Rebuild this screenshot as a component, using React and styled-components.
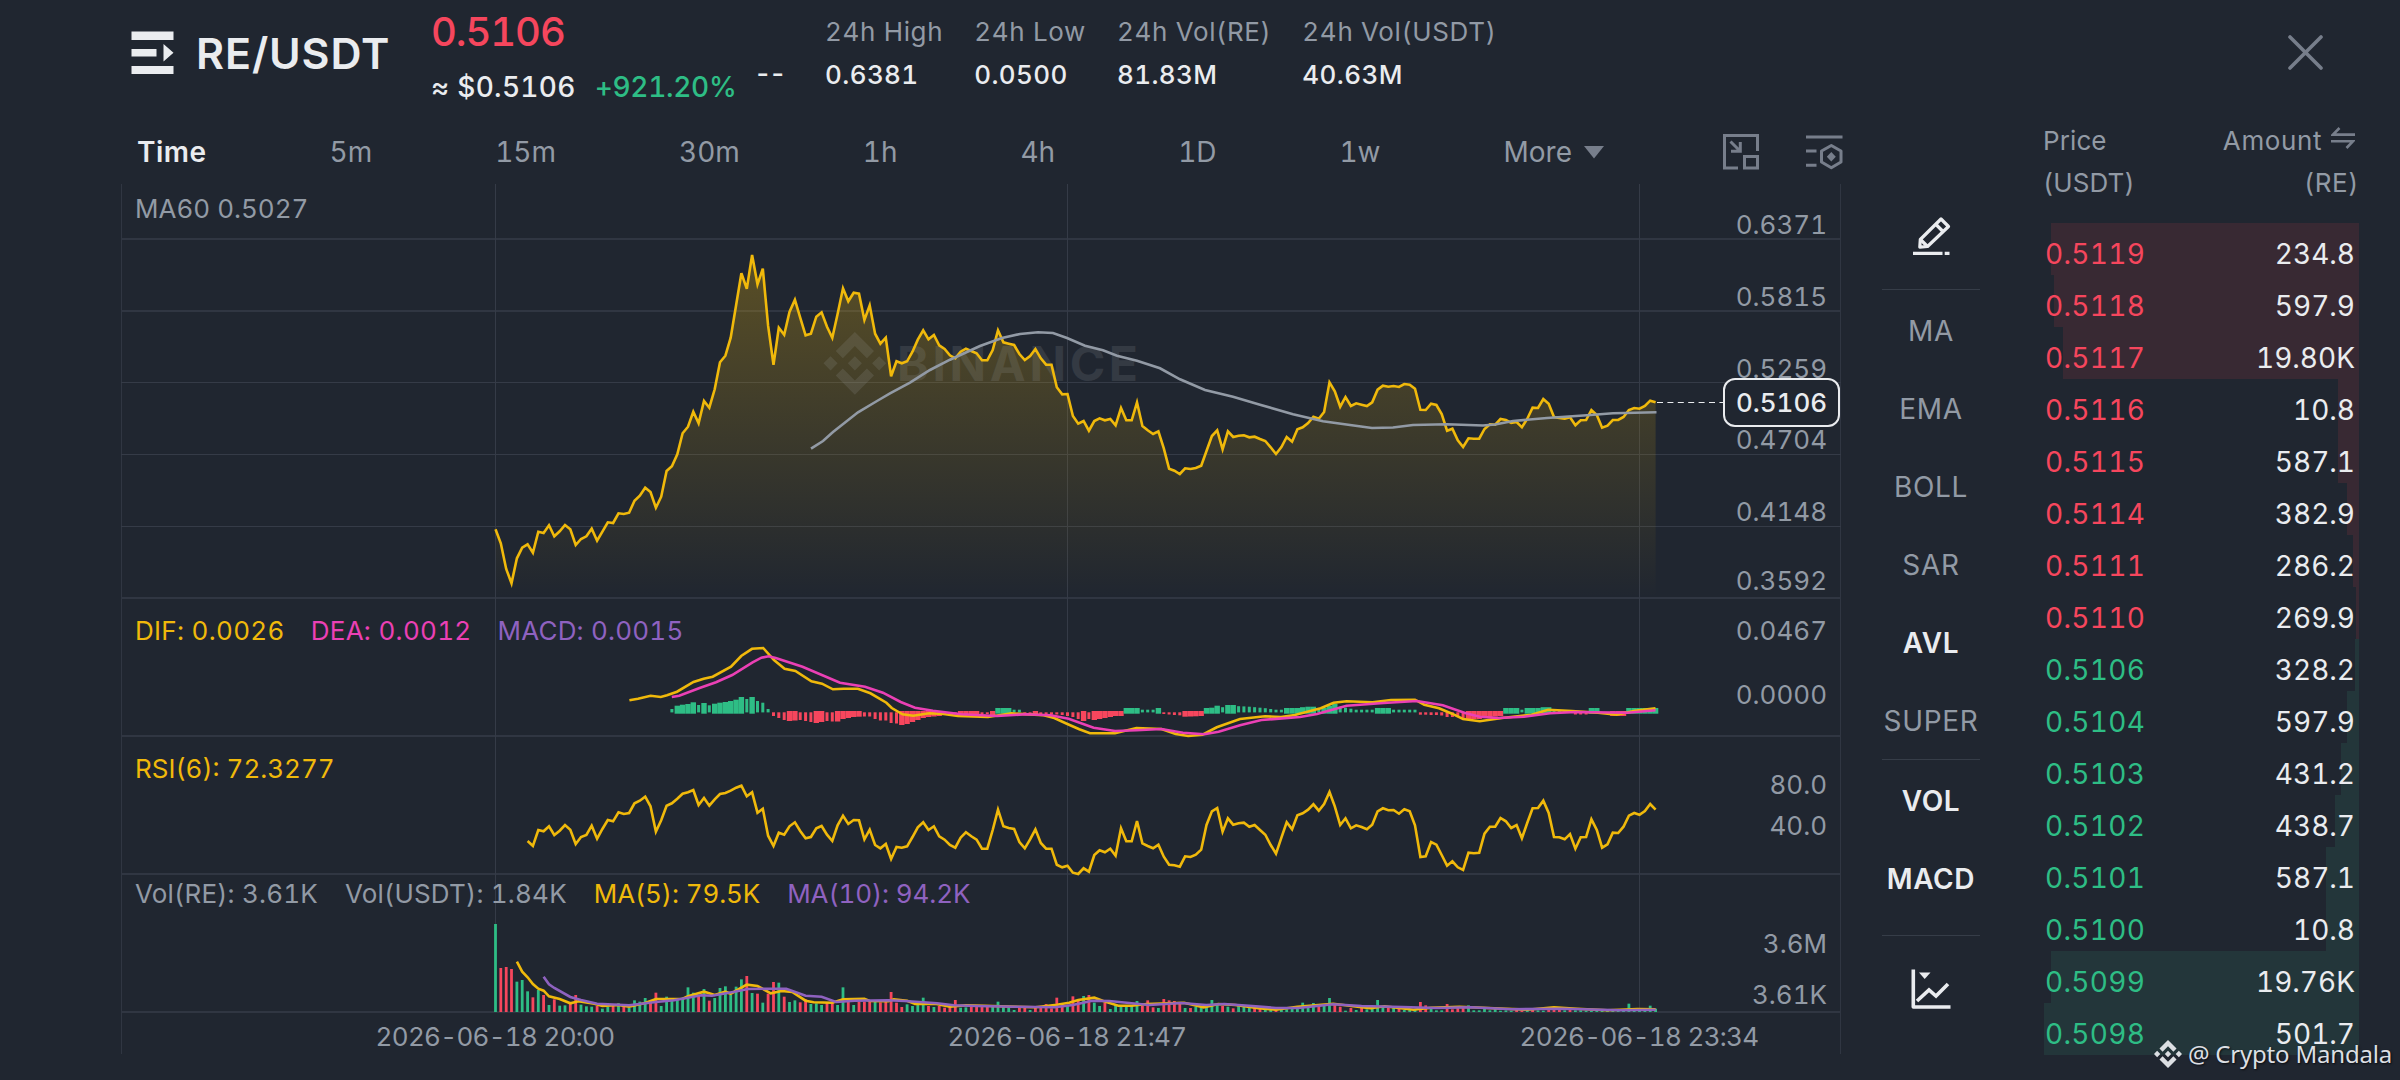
import React from 'react';
import styled, { createGlobalStyle } from 'styled-components';

const c = {
  bg: '#202630',
  line: '#303642',
  text: '#eaecef',
  muted: '#929aa5',
  icon: '#777e8b',
  red: '#f6465d',
  green: '#2ebd85',
  yellow: '#f0b90b',
  pink: '#eb40b5',
  purple: '#8f62c0'
};

const GlobalStyle = createGlobalStyle`
  * { box-sizing: border-box; }
  body {
    margin: 0;
    background: ${c.bg};
    color: ${c.text};
    font-family: Inter, "Liberation Sans", sans-serif;
    font-variant-numeric: tabular-nums;
    overflow: hidden;
  }
`;

const Page = styled.div`
  position: relative;
  width: 2400px;
  height: 1080px;
  display: flex;
  flex-direction: column;
  white-space: nowrap;
`;

/* ---------- header ---------- */

const Header = styled.header`
  height: 120px;
  padding: 0 77px 0 131px;
  display: flex;
  align-items: flex-start;
`;

const PairButton = styled.div`
  height: 105px;
  width: 300px;
  display: flex;
  align-items: center;
  gap: 22px;
`;

const Pair = styled.h1`
  margin: 0;
  font-size: 43px;
  line-height: 50px;
  font-weight: 600;
  letter-spacing: 0.9px;
`;

const PriceBlock = styled.div`
  width: 303px;
  padding-top: 7px;
`;

const LastPrice = styled.div`
  font-size: 40px;
  line-height: 50px;
  font-weight: 500;
  letter-spacing: -1.1px;
  color: ${c.red};
`;

const PriceSub = styled.div`
  display: flex;
  gap: 19px;
  padding-top: 15px;
  font-size: 28px;
  line-height: 31px;
  font-weight: 500;
  letter-spacing: 0.3px;
`;

const Change = styled.span`
  color: ${c.green};
  letter-spacing: -0.3px;
`;

const Placeholder = styled.div`
  width: 91px;
  padding: 58px 0 0 20px;
  font-size: 27px;
  line-height: 32px;
  font-weight: 500;
  letter-spacing: -2.5px;
`;

const Stats = styled.dl`
  margin: 0;
  display: flex;
  gap: 31px;
  padding-top: 15px;
  flex: 1;
`;

const StatLabel = styled.dt`
  font-size: 26px;
  line-height: 33px;
  letter-spacing: 0.65px;
  color: ${c.muted};
`;

const StatValue = styled.dd`
  margin: 10px 0 0;
  font-size: 26px;
  line-height: 33px;
  font-weight: 500;
  letter-spacing: 0.4px;
`;

const CloseButton = styled.div`
  padding-top: 35px;
  line-height: 0;
`;

/* ---------- body ---------- */

const Body = styled.main`
  display: grid;
  grid-template-columns: 1720px 160px 1fr;
  padding-left: 121px;
`;

const Toolbar = styled.div`
  height: 64px;
  display: flex;
  align-items: center;
  padding-left: 16px;
`;

const Tabs = styled.nav`
  flex: none;
  width: 1467px;
  display: flex;
  justify-content: space-between;
  font-size: 28px;
  line-height: 34px;
`;

const Tab = styled.span`
  display: flex;
  align-items: center;
  gap: 12px;
  color: ${(p) => (p.$active ? c.text : c.muted)};
  font-weight: ${(p) => (p.$active ? 600 : 400)};
  letter-spacing: ${(p) => (p.$active ? 0.5 : 0)}px;
`;

const Tools = styled.div`
  flex: none;
  display: flex;
  gap: 47px;
  margin-left: 119px;
`;

const Panes = styled.div`
  border-left: 1px solid ${c.line};
  border-right: 1px solid ${c.line};
`;

const Pane = styled.section`
  position: relative;
  height: ${(p) => p.$h}px;
  display: flex;
  justify-content: space-between;
  padding: 0 13px;
  font-size: 26px;
  line-height: 30px;
`;

const Plot = styled.svg`
  position: absolute;
  top: 0;
  left: -1px;
  overflow: visible;
`;

const Legend = styled.div`
  position: relative;
  display: flex;
  gap: ${(p) => p.$gap || 28}px;
  height: 30px;
  margin-top: ${(p) => p.$top}px;
`;

const LegendItem = styled.span`
  color: ${(p) => p.$color || c.muted};
  letter-spacing: ${(p) => p.$ls || 0}px;
`;

const Axis = styled.div`
  position: relative;
  display: flex;
  flex-direction: column;
  align-items: flex-end;
  gap: ${(p) => p.$gap}px;
  padding-top: ${(p) => p.$top}px;
  color: ${c.muted};
`;

const FloorLabel = styled.span`
  margin-top: -3px;
`;

const PriceTag = styled.div`
  position: absolute;
  top: 194px;
  right: 0;
  width: 117px;
  height: 49px;
  display: flex;
  align-items: center;
  justify-content: center;
  border: 2px solid ${c.text};
  border-radius: 12px;
  background: ${c.bg};
  color: ${c.text};
  font-weight: 500;
`;

const TimeAxis = styled.div`
  height: 42px;
  display: grid;
  grid-template-columns: repeat(3, 572px);
  justify-items: center;
  padding: 9px 0 0 87px;
  width: 1718px;
  font-size: 26px;
  line-height: 32px;
  letter-spacing: -0.7px;
  color: ${c.muted};
`;

/* ---------- indicator rail ---------- */

const Rail = styled.aside`
  width: 98px;
  margin-left: 41px;
  padding-top: 96px;
  display: flex;
  flex-direction: column;
  align-items: center;
`;

const RailGroup = styled.div`
  width: 100%;
  height: ${(p) => p.$h}px;
  padding-top: ${(p) => p.$top}px;
  border-top: 1px solid #363d48;
  display: flex;
  flex-direction: column;
  align-items: center;
`;

const RailItem = styled.div`
  flex: none;
  height: 78.1px;
  font-size: 28px;
  line-height: 34px;
  letter-spacing: ${(p) => (p.$on ? 0.6 : 0.7)}px;
  font-weight: ${(p) => (p.$on ? 600 : 400)};
  color: ${(p) => (p.$on ? c.text : c.muted)};
`;

const RailIcon = styled.div`
  height: ${(p) => p.$h}px;
  line-height: 0;
`;

/* ---------- order book ---------- */

const Book = styled.aside`
  width: 316px;
  margin-left: 42px;
`;

const BookHead = styled.div`
  height: 103px;
  display: flex;
  justify-content: space-between;
  font-size: 26px;
  line-height: 42px;
  color: ${c.muted};
  letter-spacing: 0.1px;

  div:last-child {
    text-align: right;
    letter-spacing: 0.6px;
  }
  svg {
    margin: 0 4px 1px 9px;
  }
`;

const BookRow = styled.div`
  height: 52px;
  padding: 10px 4px 0 2px;
  display: flex;
  justify-content: space-between;
  font-size: 28px;
  line-height: 43px;
  background: linear-gradient(${(p) => (p.$side === 'ask' ? '#382933, #382933' : '#23363a, #23363a')})
    right / ${(p) => p.$depth}px 100% no-repeat;
`;

const BookPrice = styled.span`
  color: ${(p) => (p.$side === 'ask' ? c.red : c.green)};
  letter-spacing: 0.3px;
`;

const Signature = styled.div`
  position: absolute;
  right: 8px;
  bottom: 9px;
  display: flex;
  align-items: center;
  gap: 6px;
  font-family: "Noto Sans", sans-serif;
  font-size: 24px;
  line-height: 34px;
  letter-spacing: -0.2px;
  color: #dcdfe3;
  text-shadow: 1px 1px 2px rgba(0, 0, 0, 0.7);
`;

/* ---------- data ---------- */

const X0 = 495.5;
const STEP = 5.346;
const xAt = (i) => +(X0 + i * STEP).toFixed(1);

// Each chunk is [offset, samples in thirds of a pixel].
const trace = (chunks, start = 0) =>
  chunks
    .flatMap(([base, ys]) => ys.map((y) => base + y / 3))
    .map((y, i) => `${xAt(i + start)},${y.toFixed(1)}`)
    .join(' ');

const price = trace([
  [230, [898, 940, 1017, 1060, 985, 953, 943, 968, 905, 909, 886, 919, 904, 885, 898, 945, 927, 919, 896, 932, 905, 877, 879,
    850, 852, 848, 812, 797, 773, 786, 833, 800, 723, 709, 673, 610, 590, 545, 580, 513, 533, 478, 397, 377, 323, 226, 130, 176,
    75, 163, 116, 287, 404, 293, 314, 246, 209, 263, 316, 311, 260, 247, 290, 323, 252, 175, 214, 188, 191, 270, 226, 311, 341,
    323, 439, 394, 400, 394, 365, 329, 301, 328, 315, 346, 357, 376, 385, 365]],
  [290, [176, 183, 190, 211, 211, 180, 121, 157, 161, 165, 192, 210, 198, 177, 205, 224, 224, 292, 313, 312, 378, 401, 393,
    422, 393, 385, 391, 387, 406, 354, 391, 391, 337, 408, 421, 432, 424, 475, 536, 542, 552, 535, 537, 534, 527, 483, 438, 421,
    478, 424, 441, 437, 436, 442, 440, 447, 453, 472, 492, 471, 441, 455, 418, 412, 399, 380, 386, 366, 277, 304, 350, 321, 348,
    340, 344, 348, 337, 299, 287, 290, 288, 291, 282, 284, 296]],
  [180, [689, 690, 671, 675, 702, 752, 746, 781, 801, 775, 776, 776, 747, 733, 734, 717, 720, 729, 726, 742, 716, 683, 684,
    657, 671, 711, 714, 716, 712, 736, 721, 720, 690, 705, 743, 737, 720, 720, 711, 690, 684, 686, 678, 662, 667]]
]);

const ma60 =
  '811,448.7 823,441 833,432 858,412.3 877,401 890,393.3 910,382.7 930,370 950,359.7 980,346 1002,338 1020,334 1038,332.3 ' +
  '1053,333 1067,338 1085,345.7 1103,350.3 1117,355.7 1137,360.7 1160,368.3 1180,379.3 1205,390 1233,396.7 1260,404.7 ' +
  '1293,414.3 1323,421.3 1350,425 1372,428 1393,427.5 1413,425 1447,424.3 1483,425.5 1495,424.5 1513,421 1547,418 1587,415.3 ' +
  '1613,413.3 1656.5,412.3';

const dif =
  '629.4,700.3 638,698.7 650.6,695.7 660.8,697 667,695.3 677,691.7 693.5,682 703.7,678.7 712.7,676.7 731,666.7 741.2,656 ' +
  '752,648.8 763.2,648 774,660 784.6,668.7 795.4,671 811.4,681.3 822,683.7 832.9,689.3 843.6,688.7 857.9,688.7 870.4,693.3 ' +
  '886.4,702.7 891.8,708 902.5,714.3 913.2,715.7 929.3,713.3 943.6,714 957.9,716 988,717 1011.4,713.3 1043.6,715.3 1054.3,718 ' +
  '1066.8,723.7 1079.3,729.3 1090,733.3 1115,733.3 1136.4,728 1161.4,729 1175.7,734 1188.2,736 1202.5,734.7 1216.8,727.3 ' +
  '1240,719 1265,716.3 1281,717 1294.8,715 1320.7,708.3 1333.6,702.7 1346.6,701.3 1372.5,702.3 1391,700 1415,699.7 ' +
  '1424.3,704.7 1439,708.3 1452,713.7 1463,719 1479.7,721.3 1502,718 1531.5,714.7 1548.2,709.7 1572,711 1598,712.7 ' +
  '1616.6,714.7 1635,710.7 1655.5,708.3';

const dea =
  '671.8,697 679.2,695.7 699.6,688 716,682.3 732.2,675 752.6,662.3 761.4,657.7 768.6,656.3 775.7,658 802.5,666.7 840,682.7 ' +
  '865,686.7 882.9,692.7 900.7,702 915,707.7 932.9,710.7 961.4,714.3 997,716 1025.7,714.3 1050.7,715.3 1068.6,718.7 ' +
  '1093.6,727.7 1115,731 1136.4,730.3 1161.4,729 1182.9,732.7 1204.3,734.3 1218.6,731.7 1240,725.3 1261.4,720 1300,717 ' +
  '1317,714 1346.6,705.7 1383.6,703 1416.9,701 1442.8,705.3 1465,713 1479.7,716.7 1498,718 1524,716.7 1550,713.3 1576,712 ' +
  '1627.7,712.7 1655.5,710.3';

// Runs of [rising, heights]; rising bars are drawn full width.
const histogram = [
  [0, [4.7]], [1, [8, 9, 9.7, 11.4]], [0, [8.7]], [1, [10.7]], [0, [8.4]], [1, [10, 11, 11.7, 12.7, 14, 16.7]], [0, [14.7]],
  [1, [16.7]], [0, [12.7, 11, 4.7, -5, -7, -9]], [1, [-10, -9.5]], [0, [-9, -10, -11]], [1, [-12, -11]], [0, [-10, -10.5]],
  [1, [-10.5, -8, -7, -6, -5.7]], [0, [-5.5, -5.5, -8, -9.5, -9.5, -12, -12.5]], [1, [-14, -13, -11, -9, -7, -6, -5.5, -5]],
  [0, [-4, -4, -3.5]], [1, [-4, -4, -4, -4]], [0, [-3, -3]], [1, [-4, 5.7, 5.7, 5.7]], [0, [4, 4, -3, -3]], [1, [-4]],
  [0, [-3, -3, -3.5, -3.5, -4, -5, -6, -8]], [1, [-10]], [0, [-8]], [1, [-9, -8, -7, -6, -5, -5, 5.7, 5.7, 5.7]],
  [0, [4, 4, 4]], [1, [5.7]], [0, [-3, -3.5, -4, -4.3]], [1, [-5.7, -5.5, -5.3, -5, 5.7, 6, 8]], [0, [6.5]], [1, [8.7, 8.7]],
  [0, [7.5, 7.3, 7, 6.5, 6, 5.5, 4.7, 4, 4]], [1, [5.7, 5.7, 5.7, 6.5, 7, 7]], [0, [5]], [1, [6, 8, 10]],
  [0, [7, 6, 5, 4, 4, 4, 4]], [1, [5.7, 5.7, 5.7]], [0, [4, 4, 4, 4, 4, -3.7, -3.7, -4, -4, -4.5, -6, -6, -6, -7]],
  [1, [-8, -8, -8, -6.5, -6, -5.5, -5, 5.7, 5.7, 5.7]], [0, [4]], [1, [5.7, 5.7, 5.7, 6.5, 6.5]],
  [0, [4, 3.5, 3, 3, -3.5, -3.5, -3.5]], [1, [5.7, 5.7]], [0, [-3, -3]], [1, [-5, -5, -5, 5.7, 5.7, 5.7, 5.7, 5.7, 5.7]]
].flatMap(([rising, hs]) => hs.map((h) => ({ rising, h })));

const rsi = trace([
  [590, [753, 768, 720, 724, 709, 735, 722, 705, 719, 762, 741, 735, 707, 746, 717, 690, 694, 667, 672, 669, 640, 632, 620,
    649, 725, 691, 647, 640, 626, 611, 607, 600, 645, 624, 647, 628, 612, 609, 602, 593]],
  [600, [557, 589, 577, 638, 626, 707, 738, 698, 704, 679, 667, 693, 715, 711, 685, 678, 704, 723, 676, 647, 672, 660, 661,
    718, 689, 735, 745, 732, 777, 741, 743, 739, 711, 682, 667, 690, 679, 709, 719, 735, 743, 713, 697, 709, 719, 746, 746, 690,
    629, 679, 684, 687, 726, 745, 718, 688, 729, 746, 746, 794, 802, 797, 818, 822, 805, 815, 765, 751, 757, 746, 767, 685, 724,
    724, 663, 730, 738, 745, 734, 770, 794, 796, 800, 769, 771, 764, 749, 675, 634, 624, 695, 655, 674, 670, 668, 680, 675, 690,
    704, 735, 761, 713]],
  [590, [697, 718, 676, 670, 659, 643, 662, 642, 606, 649, 705, 685, 715, 706, 711, 718, 704, 664, 655, 661, 660, 671, 658,
    664, 706, 801, 799, 756, 764, 795, 827, 814, 832, 840, 788, 790, 788, 731, 710, 710, 684, 694, 714, 705, 745, 698, 655, 654,
    632, 669, 741, 742, 748, 732, 776, 742, 741, 688, 720, 773, 763, 728, 729, 710, 677, 669, 674, 663, 642, 659]]
], 6);

// Volume in thirds of a pixel, negative for down candles.
const volume = [
  264, -132, -135, -129, 91, 96, 62, -44, 66, -51, 21, -38, 19, 20, -24, -51, 22, 17, 16, -18, 10, 16, -18, 26, -18, 12, 35, 31,
  42, -29, -58, 18, 46, 38, 41, 43, 74, 58, -49, 69, -34, 42, 72, 77, 51, 76, 98, -108, 57, -55, 28, -55, -90, 88, -46, 30, 35,
  -29, -38, 24, 26, 21, -28, -28, 21, 74, -31, 21, -31, -31, -34, 31, -29, -31, -60, -28, -15, 23, 18, 22, 43, -18, 15, -18,
  -13, -16, -36, 13, 14, -17, -15, -17, -16, 18, 31, 18, 15, 6, -18, -17, 6, -12, -13, -24, -11, -43, -21, 21, -47, -36, 48,
  -51, 28, 18, -28, 9, 21, 18, 18, 18, 33, -18, -35, -14, 12, -39, -35, -33, -26, 12, -12, 16, 14, 16, 36, 24, -18, 16, -11, 18,
  18, 14, -14, -10, 6, 6, -8, 8, 8, 12, 15, 28, 16, 27, -18, 20, 42, -24, -16, 4, -12, 6, -16, 8, 12, 36, 16, -12, 14, -10, 6,
  6, 8, -30, -20, 12, 5, 5, -24, -8, -14, -16, 20, 5, 5, 12, 5, 10, 4, 5, 4, -6, -5, 7, -7, 5, 4, -9, -10, -10, 5, -8, 5, 5, 4,
  3, 4, 3, 4, 4, 4, 4, 25, 4, 5, 4, 19, 10
];

const volLine = (pts) => pts.map(([i, h]) => `${xAt(i)},${(1012 - h / 3).toFixed(1)}`).join(' ');

const volMa5 = volLine([
  [4, 151], [5, 121], [6, 104], [7, 84], [8, 70], [9, 64], [10, 47], [12, 39], [14, 26], [15.5, 32], [18.5, 25], [20, 18],
  [23, 21], [25, 16], [28, 27], [30, 39], [35, 40], [36, 47], [39, 61], [41, 51], [43, 61], [44, 55], [47, 82], [49, 78],
  [51.5, 56], [53.5, 63], [55.5, 60], [58, 34], [59.5, 29], [63, 28], [65, 38], [69, 40], [70, 33], [73.5, 32], [74.5, 38],
  [77, 34], [78.5, 24], [82.5, 24], [85, 16], [88, 20], [93, 18], [101, 14], [105, 22], [107.3, 28], [109, 36], [112, 43],
  [113.7, 33], [116.5, 19], [119, 19], [121.8, 24], [128.8, 28], [132.5, 14], [135.2, 24], [138.4, 21], [142.7, 11], [146, 7],
  [150, 16], [156.7, 25], [162, 14], [163.7, 11], [166.3, 17], [171.7, 7], [175, 13], [180.3, 16], [189, 10], [193, 7],
  [198, 14], [202.3, 10], [208, 5], [213.6, 9], [217, 8]
]);

const volMa10 = volLine([
  [9, 106], [10, 83], [11, 72], [14, 45], [16, 36], [19, 25], [25, 20], [30, 30], [33.4, 35], [38.5, 50], [40.5, 49],
  [44.7, 61], [47.2, 69], [52, 70], [54.4, 70], [58, 49], [61, 46], [63.7, 30], [67.2, 34], [73.4, 35], [76.5, 33], [80, 29],
  [82.6, 26], [85.7, 20], [90, 18], [97.6, 16], [104.6, 14], [108, 21], [111.6, 34], [114.8, 33], [119, 26], [122.3, 21],
  [128.2, 27], [133, 21], [136.3, 24], [141.6, 18], [146, 12], [150.2, 12], [156.7, 23], [162, 18], [169.6, 15], [176, 12],
  [182.4, 14], [190, 8], [199.6, 10], [210.4, 5], [217, 7]
]);

const stats = [
  ['24h High', '0.6381'],
  ['24h Low', '0.0500'],
  ['24h Vol(RE)', '81.83M'],
  ['24h Vol(USDT)', '40.63M']
];

const tabs = ['Time', '5m', '15m', '30m', '1h', '4h', '1D', '1w', 'More'];

const overlays = ['MA', 'EMA', 'BOLL', 'SAR', 'AVL', 'SUPER'];

// price, amount, depth bar width
const asks = [
  ['0.5119', '234.8', 308],
  ['0.5118', '597.9', 305],
  ['0.5117', '19.80K', 296],
  ['0.5116', '10.8', 21],
  ['0.5115', '587.1', 21],
  ['0.5114', '382.9', 12],
  ['0.5111', '286.2', 6],
  ['0.5110', '269.9', 3]
];

const bids = [
  ['0.5106', '328.2', 4],
  ['0.5104', '597.9', 12],
  ['0.5103', '431.2', 18],
  ['0.5102', '438.7', 24],
  ['0.5101', '587.1', 33],
  ['0.5100', '10.8', 33],
  ['0.5099', '19.76K', 308],
  ['0.5098', '501.7', 315]
];

/* ---------- drawings ---------- */

// Binance mark on a 64 x 64 box
const Mark = (props) => (
  <g {...props}>
    <path d="M32 0 51.5 19.5 44.3 26.7 32 14.4 19.7 26.7 12.5 19.5Z" />
    <path d="M32 64 51.5 44.5 44.3 37.3 32 49.6 19.7 37.3 12.5 44.5Z" />
    <path d="M32 24.8 39.2 32 32 39.2 24.8 32ZM7.2 24.8 14.4 32 7.2 39.2 0 32ZM56.8 24.8 64 32 56.8 39.2 49.6 32Z" />
  </g>
);

const MenuIcon = () => (
  <svg width="43" height="44" viewBox="0 0 43 44" fill={c.text}>
    <path d="M0.5 0.5H42.5V9H0.5ZM0.5 18H25.5V25.5H0.5ZM0.5 35H42.5V43H0.5ZM32.5 13 42.5 21.8 32.5 30.5Z" />
  </svg>
);

const CollapseIcon = () => (
  <svg width="36" height="36" viewBox="0 0 36 36" fill="none" stroke={c.icon} strokeWidth="3">
    <path d="M34.5 17V1.5H1.5V34H15" />
    <rect x="21.5" y="22.5" width="13" height="11.5" />
    <path d="M7.5 7.5 17 17M17.3 8V17.3H8" />
  </svg>
);

const ChartSettingsIcon = () => (
  <svg width="37" height="36" viewBox="0 0 37 36" fill="none" stroke={c.icon} strokeWidth="3">
    <path d="M0 3H36.5M0 17H10.5M0 31.3H10.5" />
    <path d="M25.3 11.5 35 17V28L25.3 33.8 15.5 28V17Z" strokeLinejoin="round" />
    <path d="M25.3 18 29.8 22.8 25.3 27.5 20.8 22.8Z" fill={c.icon} stroke="none" />
  </svg>
);

const PencilIcon = () => (
  <svg width="40" height="40" viewBox="0 0 40 40" fill="none" stroke={c.text} strokeWidth="3.2">
    <path d="M30 3 37.5 10.5 16.5 30.5 8.8 31.2 9.3 23.5Z" strokeLinejoin="round" />
    <path d="M24.5 8 32.5 16M9.5 23.5 16.5 30.5" />
    <path d="M2 37.3H31.5M33.7 37.3H38.5" />
  </svg>
);

const IndicatorIcon = () => (
  <svg width="40" height="40" viewBox="0 0 40 40" fill="none" stroke={c.text} strokeWidth="3.6">
    <path d="M2.3 0.5V38H39.5" strokeLinejoin="round" />
    <path d="M6 32 18 21 25 27 37 15" />
    <path d="M8 3.5H19.5L13.7 10Z" fill={c.text} stroke="none" />
  </svg>
);

const SwapIcon = () => (
  <svg width="24" height="22" viewBox="0 0 24 22" fill="none" stroke={c.icon} strokeWidth="2.6">
    <path d="M8.5 1 2 7.6H24M0 14.2H22L15.5 21" />
  </svg>
);

const Verticals = ({ y1, y2 }) => (
  <path d={[495.5, 1067.5, 1639.5].map((x) => `M${x} ${y1}V${y2}`).join('')} stroke="#353b47" />
);

const BaseLine = ({ y }) => <path d={`M121 ${y}H1841`} stroke={c.line} strokeWidth="2" />;

const PricePlot = () => (
  <Plot width="1720" height="414" viewBox="121 184 1720 414">
    <defs>
      <linearGradient id="area" gradientUnits="userSpaceOnUse" x1="0" y1="255" x2="0" y2="598">
        <stop offset="0" stopColor={c.yellow} stopOpacity="0.28" />
        <stop offset="1" stopColor={c.yellow} stopOpacity="0" />
      </linearGradient>
    </defs>
    <path d="M121 239H1841M121 311H1841" stroke={c.line} strokeWidth="2" />
    <path d="M121 382.5H1841M121 454.5H1841M121 526.5H1841" stroke="#353b47" />
    <BaseLine y={598} />
    <Verticals y1={184} y2={598} />
    <polygon points={`${price} ${xAt(217)},598 ${X0},598`} fill="url(#area)" />
    <g fill="#b7bdc6" opacity="0.13">
      <Mark transform="translate(823.5 332) scale(0.98)" />
      <text x="897" y="381" fontSize="48" fontWeight="700" textLength="241">BINANCE</text>
    </g>
    <polyline points={price} fill="none" stroke={c.yellow} strokeWidth="2.6" />
    <polyline points={ma60} fill="none" stroke={c.muted} strokeWidth="2.6" />
    <path d="M1657 402.5H1723" stroke={c.text} strokeDasharray="6 4.4" />
  </Plot>
);

const MacdPlot = () => (
  <Plot width="1720" height="138" viewBox="121 598 1720 138">
    <BaseLine y={736} />
    <Verticals y1={598} y2={736} />
    {histogram.map(({ rising, h }, i) => {
      const w = rising ? 5.4 : 3;
      const inset = rising ? 0 : 1.3;
      const up = h > 0;
      return (
        <rect
          key={i}
          x={xAt(i + 33) - w / 2}
          y={up ? 713.7 - h : 711 + inset}
          width={w}
          height={Math.abs(h) - inset}
          fill={up ? c.green : c.red}
        />
      );
    })}
    <polyline points={dif} fill="none" stroke={c.yellow} strokeWidth="2.6" />
    <polyline points={dea} fill="none" stroke={c.pink} strokeWidth="2.6" />
  </Plot>
);

const RsiPlot = () => (
  <Plot width="1720" height="138" viewBox="121 736 1720 138">
    <BaseLine y={874} />
    <Verticals y1={736} y2={874} />
    <polyline points={rsi} fill="none" stroke={c.yellow} strokeWidth="2.6" />
  </Plot>
);

const VolumePlot = () => (
  <Plot width="1720" height="138" viewBox="121 874 1720 138">
    <BaseLine y={1012} />
    <Verticals y1={874} y2={1012} />
    {volume.map((v, i) => (
      <rect
        key={i}
        x={xAt(i) - 1.4}
        y={1012 - Math.abs(v) / 3}
        width="2.8"
        height={Math.abs(v) / 3}
        fill={v > 0 ? c.green : c.red}
      />
    ))}
    <polyline points={volMa5} fill="none" stroke={c.yellow} strokeWidth="2.6" />
    <polyline points={volMa10} fill="none" stroke={c.purple} strokeWidth="2.6" />
  </Plot>
);

const BookSide = ({ rows, side }) =>
  rows.map(([p, amount, depth]) => (
    <BookRow key={p} $side={side} $depth={depth}>
      <BookPrice $side={side}>{p}</BookPrice>
      <span>{amount}</span>
    </BookRow>
  ));

export default function App() {
  return (
    <Page>
      <GlobalStyle />
      <Header>
        <PairButton>
          <MenuIcon />
          <Pair>RE/USDT</Pair>
        </PairButton>
        <PriceBlock>
          <LastPrice>0.5106</LastPrice>
          <PriceSub>
            <span>≈ $0.5106</span>
            <Change>+921.20%</Change>
          </PriceSub>
        </PriceBlock>
        <Placeholder>--</Placeholder>
        <Stats>
          {stats.map(([label, value]) => (
            <div key={label}>
              <StatLabel>{label}</StatLabel>
              <StatValue>{value}</StatValue>
            </div>
          ))}
        </Stats>
        <CloseButton>
          <svg width="35" height="35" viewBox="0 0 35 35" stroke={c.icon} strokeWidth="3.6" strokeLinecap="round">
            <path d="M2 2 33 33M33 2 2 33" />
          </svg>
        </CloseButton>
      </Header>

      <Body>
        <div>
          <Toolbar>
            <Tabs>
              {tabs.map((t) => (
                <Tab key={t} $active={t === 'Time'}>
                  {t}
                  {t === 'More' && (
                    <svg width="20" height="13" viewBox="0 0 20 13" fill={c.icon}>
                      <path d="M0 0H20L10 12.5Z" />
                    </svg>
                  )}
                </Tab>
              ))}
            </Tabs>
            <Tools>
              <CollapseIcon />
              <ChartSettingsIcon />
            </Tools>
          </Toolbar>

          <Panes>
            <Pane $h={414}>
              <PricePlot />
              <Legend $top={10}>
                <LegendItem>MA60 0.5027</LegendItem>
              </Legend>
              <Axis $top={26} $gap={41.8}>
                <span>0.6371</span>
                <span>0.5815</span>
                <span>0.5259</span>
                <span>0.4704</span>
                <span>0.4148</span>
                <FloorLabel>0.3592</FloorLabel>
              </Axis>
              <PriceTag>0.5106</PriceTag>
            </Pane>
            <Pane $h={138}>
              <MacdPlot />
              <Legend $top={18} $gap={26}>
                <LegendItem $color={c.yellow} $ls={0.3}>DIF: 0.0026</LegendItem>
                <LegendItem $color={c.pink} $ls={0.3}>DEA: 0.0012</LegendItem>
                <LegendItem $color={c.purple} $ls={0.2}>MACD: 0.0015</LegendItem>
              </Legend>
              <Axis $top={18} $gap={34}>
                <span>0.0467</span>
                <span>0.0000</span>
              </Axis>
            </Pane>
            <Pane $h={138}>
              <RsiPlot />
              <Legend $top={18}>
                <LegendItem $color={c.yellow}>RSI(6): 72.3277</LegendItem>
              </Legend>
              <Axis $top={34} $gap={11}>
                <span>80.0</span>
                <span>40.0</span>
              </Axis>
            </Pane>
            <Pane $h={138}>
              <VolumePlot />
              <Legend $top={5} $gap={27}>
                <LegendItem $ls={0.2}>Vol(RE): 3.61K</LegendItem>
                <LegendItem $ls={0.2}>Vol(USDT): 1.84K</LegendItem>
                <LegendItem $color={c.yellow} $ls={-0.1}>MA(5): 79.5K</LegendItem>
                <LegendItem $color={c.purple} $ls={-0.1}>MA(10): 94.2K</LegendItem>
              </Legend>
              <Axis $top={55} $gap={21}>
                <span>3.6M</span>
                <span>3.61K</span>
              </Axis>
            </Pane>
            <TimeAxis>
              <span>2026-06-18 20:00</span>
              <span>2026-06-18 21:47</span>
              <span>2026-06-18 23:34</span>
            </TimeAxis>
          </Panes>
        </div>

        <Rail>
          <RailIcon $h={73}>
            <PencilIcon />
          </RailIcon>
          <RailGroup $h={470} $top={24}>
            {overlays.map((name) => (
              <RailItem key={name} $on={name === 'AVL'}>{name}</RailItem>
            ))}
          </RailGroup>
          <RailGroup $h={176} $top={24}>
            <RailItem $on>VOL</RailItem>
            <RailItem $on>MACD</RailItem>
          </RailGroup>
          <RailGroup $h={80} $top={33}>
            <IndicatorIcon />
          </RailGroup>
        </Rail>

        <Book>
          <BookHead>
            <div>
              Price
              <br />
              (USDT)
            </div>
            <div>
              Amount
              <SwapIcon />
              <br />
              (RE)
            </div>
          </BookHead>
          <BookSide rows={asks} side="ask" />
          <BookSide rows={bids} side="bid" />
        </Book>
      </Body>

      <Signature>
        <svg width="28" height="28" viewBox="0 0 64 64" fill="#dcdfe3">
          <Mark />
        </svg>
        <span>@ Crypto Mandala</span>
      </Signature>
    </Page>
  );
}
